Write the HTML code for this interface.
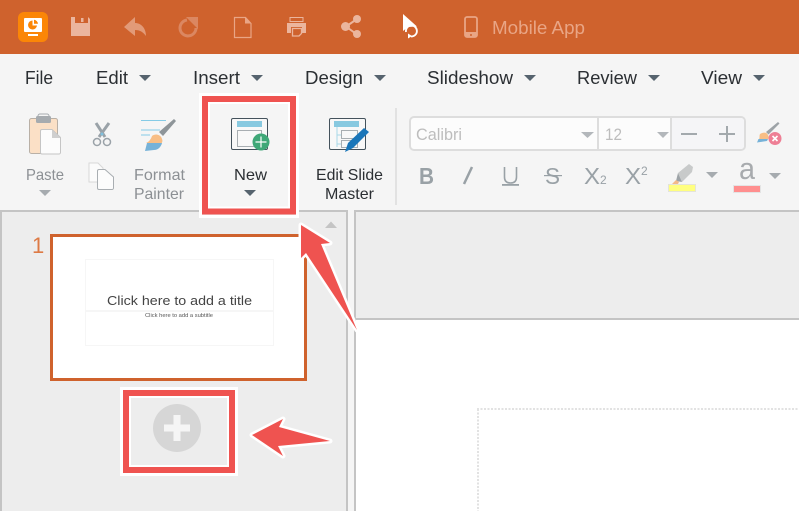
<!DOCTYPE html>
<html><head><meta charset="utf-8"><style>
html,body{margin:0;padding:0;width:799px;height:511px;overflow:hidden;background:#fff}
svg{display:block}
text{font-family:"Liberation Sans",sans-serif}
</style></head><body>
<svg width="799" height="511" viewBox="0 0 799 511" xmlns="http://www.w3.org/2000/svg">
<rect width="799" height="511" fill="#F5F5F5"/>
<rect width="799" height="54" fill="#CF622D"/>
<!-- logo -->
<rect x="18" y="12" width="30" height="30" rx="6" fill="#FB8607"/>
<rect x="24" y="18" width="18" height="14" rx="1" fill="#fff"/>
<path d="M32.500 20.500a4.500 4.500 0 1 0 4.500 5h-4.500z" fill="#FB8607"/><path d="M34 19.800a4.500 4.500 0 0 1 4 4h-4z" fill="#FB8607"/>
<rect x="28" y="34" width="10" height="2" fill="#fff"/>
<!-- save -->
<path d="M71 17h17l2 2v17H71z" fill="#EBB59D"/><rect x="75" y="17" width="13" height="6" fill="#CF622D"/><rect x="81" y="18" width="2.500" height="4" fill="#EBB59D"/>
<!-- undo -->
<path d="M124 27l11-10v6c6 0 11 5 11 13c-3-4-6-6-11-6v6z" fill="#E29A78"/>
<!-- redo -->
<path d="M196 28a8 8 0 1 1-9-8" fill="none" stroke="#DB8761" stroke-width="3"/><path d="M186 17h12v12z" fill="#DB8761"/>
<!-- doc -->
<path d="M234.500 17.500h11l5.500 6v14h-16.500z" fill="none" stroke="#E9A585" stroke-width="1.200"/><path d="M245 17.500l6 6h-6z" fill="#E9A585"/>
<!-- print -->
<path d="M287 23h19v10h-4v-6h-11v6h-4z" fill="#EBB59D"/><path d="M290 17.500h13v4h-13z" fill="none" stroke="#EBB59D"/><path d="M292.500 28.500h9v5l-2.500 2.500h-6.500z" fill="none" stroke="#EBB59D" stroke-width="1.300"/>
<!-- share -->
<path d="M357 19l-11 7.500 11 8" fill="none" stroke="#EBB59D" stroke-width="2"/><circle cx="345.500" cy="26.500" r="4.500" fill="#EBB59D"/><circle cx="357" cy="19" r="4" fill="#EBB59D"/><circle cx="357" cy="34" r="4" fill="#EBB59D"/>
<!-- slideshow -->
<path d="M403 14l14 12.500l-9 .5-5 4z" fill="#fff"/><path d="M406 32a5.500 5.500 0 1 1 5 4.500" fill="none" stroke="#fff" stroke-width="1.800"/><path d="M408 33.500v5l4-2.500z" fill="#fff"/>
<!-- phone -->
<rect x="465" y="17" width="12" height="20" rx="2" fill="none" stroke="#E9A585" stroke-width="1.800"/><rect x="465" y="32" width="12" height="5" fill="#E9A585"/><circle cx="471" cy="35" r="1" fill="#CF622D"/>
<text x="492" y="34" font-size="18" fill="#E9A585" textLength="93" lengthAdjust="spacingAndGlyphs">Mobile App</text>
<!-- menu -->
<g font-size="18" fill="#2b2f33" >
<text x="25" y="84" textLength="28" lengthAdjust="spacingAndGlyphs">File</text>
<text x="96" y="84" textLength="32" lengthAdjust="spacingAndGlyphs">Edit</text>
<text x="193" y="84" textLength="47" lengthAdjust="spacingAndGlyphs">Insert</text>
<text x="305" y="84" textLength="58" lengthAdjust="spacingAndGlyphs">Design</text>
<text x="427" y="84" textLength="86" lengthAdjust="spacingAndGlyphs">Slideshow</text>
<text x="577" y="84" textLength="60" lengthAdjust="spacingAndGlyphs">Review</text>
<text x="701" y="84" textLength="41" lengthAdjust="spacingAndGlyphs">View</text>
</g>
<g fill="#56636E">
<path d="M139 75h12l-6 6z"/><path d="M251 75h12l-6 6z"/><path d="M374 75h12l-6 6z"/><path d="M524 75h12l-6 6z"/><path d="M648 75h12l-6 6z"/><path d="M753 75h12l-6 6z"/>
</g>
<!-- paste icon -->
<rect x="29.500" y="118.500" width="28" height="35" rx="2" fill="#FBE0C6" stroke="#B9B0A6"/>
<rect x="36" y="116" width="15" height="7" rx="1.500" fill="#A6ABAF"/><rect x="38" y="114" width="11" height="4" rx="2" fill="none" stroke="#A6ABAF"/>
<path d="M42 129.500h10l8.500 8v15a1.500 1.500 0 0 1-1.500 1.500H42a1.500 1.500 0 0 1-1.500-1.500v-21.500a1.500 1.500 0 0 1 1.500-1.500z" fill="#FCFCFC" stroke="#C5C5C5"/>
<path d="M52 130l8.500 8h-8.500z" fill="#CFCFCF"/>
<text x="26" y="180" font-size="16" fill="#8C9094" textLength="38" lengthAdjust="spacingAndGlyphs">Paste</text>
<path d="M39 190h12l-6 6z" fill="#A6ABAF"/>
<!-- scissors -->
<path d="M96 123l9 14M109 123l-10 14" stroke="#9AA2A8" stroke-width="3" fill="none"/><circle cx="97" cy="142" r="3.500" fill="none" stroke="#9AA2A8" stroke-width="1.500"/><circle cx="107" cy="142" r="3.500" fill="none" stroke="#9AA2A8" stroke-width="1.500"/><circle cx="102" cy="134" r="1.500" fill="#7FC0DE"/>
<!-- copy -->
<path d="M89 163h9l5 5v14H89z" fill="#FBFBFB" stroke="#D8D8D8"/>
<path d="M99 169.500h6l8.500 7.500v11a1.500 1.500 0 0 1-1.500 1.500H99a1.500 1.500 0 0 1-1.500-1.500v-17a1.500 1.500 0 0 1 1.500-1.500z" fill="#FCFCFC" stroke="#A9AEB2"/>
<!-- format painter -->
<path d="M141 120.500h25M141 130h19M141 135h9" stroke="#85CBE6" stroke-width="1"/>
<path d="M159 132l15-13 2 2-13 15z" fill="#8E9599"/>
<path d="M152 136c4-3 9-1 10 3c1 2 0 4-1 5l-15-1c3-1 5-4 6-7z" fill="#F8BE85"/>
<path d="M147 143h15c-1 4-4 7-8 7l-9 1z" fill="#76B2D8"/>
<text x="134" y="180" font-size="16" fill="#8C9094" textLength="51" lengthAdjust="spacingAndGlyphs">Format</text>
<text x="134" y="199" font-size="16" fill="#8C9094" textLength="50" lengthAdjust="spacingAndGlyphs">Painter</text>
<!-- New icon -->
<rect x="231.500" y="118.500" width="36" height="31" rx="1.500" fill="#F8F8F8" stroke="#44525C"/>
<rect x="237" y="121" width="25" height="6" fill="#88C9E0"/>
<rect x="237.500" y="130.500" width="24" height="16" fill="#F8F8F8" stroke="#A8AEB2"/>
<circle cx="261" cy="142" r="8.500" fill="#3FA878"/><path d="M261 136.500v11M255.500 142h11" stroke="#fff" stroke-width="1.200"/>
<text x="234" y="180" font-size="16" fill="#2b2f33" textLength="33" lengthAdjust="spacingAndGlyphs">New</text>
<path d="M244 190h12l-6 6z" fill="#56636E"/>
<!-- Master icon -->
<rect x="329.500" y="118.500" width="36" height="31" rx="1.500" fill="#F8F8F8" stroke="#44525C"/>
<rect x="334" y="121" width="25" height="6" fill="#88C9E0"/>
<path d="M337 127v20M337 135h4M337 144h4" stroke="#A8D8E8" fill="none"/>
<rect x="341.500" y="130.500" width="16" height="8" fill="#F8F8F8" stroke="#A8AEB2"/><rect x="341.500" y="140.500" width="16" height="7" fill="#F8F8F8" stroke="#A8AEB2"/>
<path d="M345 152l3-9 16-15 5 4-16 16z" fill="#1A76B9"/>
<text x="316" y="180" font-size="16" fill="#2b2f33" textLength="67" lengthAdjust="spacingAndGlyphs">Edit Slide</text>
<text x="325" y="199" font-size="16" fill="#2b2f33" textLength="49" lengthAdjust="spacingAndGlyphs">Master</text>
<rect x="395" y="108" width="2" height="97" fill="#E2E2E2"/>
<!-- font box -->
<rect x="410" y="117" width="335" height="33" rx="4" fill="#FCFCFC" stroke="#DDDDDD" stroke-width="2"/>
<path d="M672 118h69a3 3 0 0 1 3 3v25a3 3 0 0 1-3 3h-69z" fill="#F5F5F7"/>
<rect x="597" y="118" width="2" height="32" fill="#DDDDDD"/><rect x="670" y="118" width="2" height="32" fill="#DDDDDD"/>
<text x="416" y="140" font-size="17" fill="#BDBDBD" textLength="46" lengthAdjust="spacingAndGlyphs">Calibri</text>
<text x="605" y="140" font-size="17" fill="#BDBDBD" textLength="17" lengthAdjust="spacingAndGlyphs">12</text>
<path d="M581 132h13l-6.500 6z" fill="#B3B7BB"/><path d="M657 132h12l-6 6z" fill="#B3B7BB"/>
<path d="M681 134h16M719 134h16M727 126v16" stroke="#A3A9AD" stroke-width="2" fill="none"/>
<!-- eraser icon -->
<path d="M766 132l12-10 1.500 1.500-11 11z" fill="#9DA3A7"/>
<path d="M760 134c3-2 7-2 8 1c1 2 1 3 0 4h-9c1-1 0-3 1-5z" fill="#F8BE85"/><path d="M758.500 139h9.500l-1 2-10 1.500z" fill="#76B2D8"/>
<circle cx="775" cy="138.500" r="6.500" fill="#EE7F95"/><path d="M772.500 136l5 5M777.500 136l-5 5" stroke="#fff" stroke-width="1.600"/>
<!-- format row -->
<text x="419" y="184" font-size="23.500" font-weight="bold" fill="#99A1A6" textLength="15" lengthAdjust="spacingAndGlyphs">B</text>
<path d="M472 167l-8 17" stroke="#99A1A6" stroke-width="2.500"/>
<path d="M504.500 167v10c0 4 2 6 6 6s6-2 6-6v-10" fill="none" stroke="#99A1A6" stroke-width="1.600"/><rect x="502" y="184" width="17" height="1.800" fill="#99A1A6"/>
<text x="545" y="184" font-size="23" fill="#99A1A6" textLength="15" lengthAdjust="spacingAndGlyphs">S</text><rect x="544" y="175" width="18" height="1.200" fill="#99A1A6"/>
<text x="584" y="184" font-size="23" fill="#99A1A6" textLength="16" lengthAdjust="spacingAndGlyphs">X</text><text x="600" y="184" font-size="12" fill="#99A1A6">2</text>
<text x="625" y="184" font-size="23" fill="#99A1A6" textLength="16" lengthAdjust="spacingAndGlyphs">X</text><text x="641" y="175" font-size="12" fill="#99A1A6">2</text>
<!-- highlight -->
<path d="M678 173l11-9 4 3-1 5-10 10z" fill="#C8CACA"/><path d="M678 173l4 9-6-1z" fill="#9DA3A7"/><path d="M672 184l4-4 3 2-1 2z" fill="#F3B98A"/>
<rect x="668.500" y="184.500" width="27" height="7" fill="#FFFF80" stroke="#E4E4D8"/>
<path d="M706 172h12l-6 6z" fill="#A6ABAF"/>
<text x="739" y="179" font-size="31" fill="#A8ABAE" textLength="16" lengthAdjust="spacingAndGlyphs">a</text>
<rect x="733.500" y="185.500" width="27" height="7" fill="#FF8F8F" stroke="#E4E4E4"/>
<path d="M769 173h12l-6 6z" fill="#A6ABAF"/>
<!-- left panel -->
<rect x="1" y="211" width="346" height="302" fill="#EDEDED" stroke="#C4C4C4" stroke-width="2"/>
<path d="M325 228l6-6.500 6 6.500z" fill="#C4C4C4"/>
<text x="32" y="253" font-size="22" fill="#DD7A45">1</text>
<rect x="51.500" y="235.500" width="254" height="144" fill="#fff" stroke="#CF622D" stroke-width="3"/>
<rect x="85.500" y="259.500" width="188" height="51" fill="#fff" stroke="#F6F6F6"/>
<rect x="85.500" y="311.500" width="188" height="34" fill="#fff" stroke="#F6F6F6"/>
<text x="107" y="305" font-size="13" fill="#444" textLength="145" lengthAdjust="spacingAndGlyphs">Click here to add a title</text>
<text x="145" y="317" font-size="5" fill="#555" textLength="68" lengthAdjust="spacingAndGlyphs">Click here to add a subtitle</text>
<!-- add slide -->
<circle cx="177" cy="428" r="24" fill="#D6D6D6"/><path d="M164 428h26M177 415v26" stroke="#F5F5F5" stroke-width="7"/>
<!-- main -->
<rect x="355" y="211" width="446" height="108" fill="#EDEDED" stroke="#C4C4C4" stroke-width="2"/>
<rect x="356" y="320" width="443" height="191" fill="#fff"/>
<rect x="354" y="319" width="2" height="192" fill="#C4C4C4"/>
<path d="M477 409H799M478 409V511" stroke="#E2E2E2" stroke-width="2" stroke-dasharray="2 1.500" fill="none"/>
<!-- red boxes -->
<rect x="200.500" y="94.500" width="97" height="122" fill="none" stroke="#fff" stroke-width="3"/>
<rect x="205" y="99" width="88" height="112.500" fill="none" stroke="#EF5350" stroke-width="6"/>
<rect x="209" y="103" width="80" height="104.500" fill="none" stroke="#fff" stroke-width="2"/>
<rect x="121.500" y="388.500" width="115" height="86" fill="none" stroke="#fff" stroke-width="3"/>
<rect x="126" y="393" width="106" height="77" fill="none" stroke="#EF5350" stroke-width="6"/>
<rect x="130" y="397" width="98" height="69" fill="none" stroke="#fff" stroke-width="2"/>
<!-- arrows -->
<path d="M301 225L330 243L321 244L357 330L306 253L301 258z" fill="#EF5350" stroke="#fff" stroke-width="5" stroke-linejoin="round" paint-order="stroke"/>
<path d="M252 435L283 419L279 427L330 441L278 446L283 456z" fill="#EF5350" stroke="#fff" stroke-width="5" stroke-linejoin="round" paint-order="stroke"/>
</svg>
</body></html>
